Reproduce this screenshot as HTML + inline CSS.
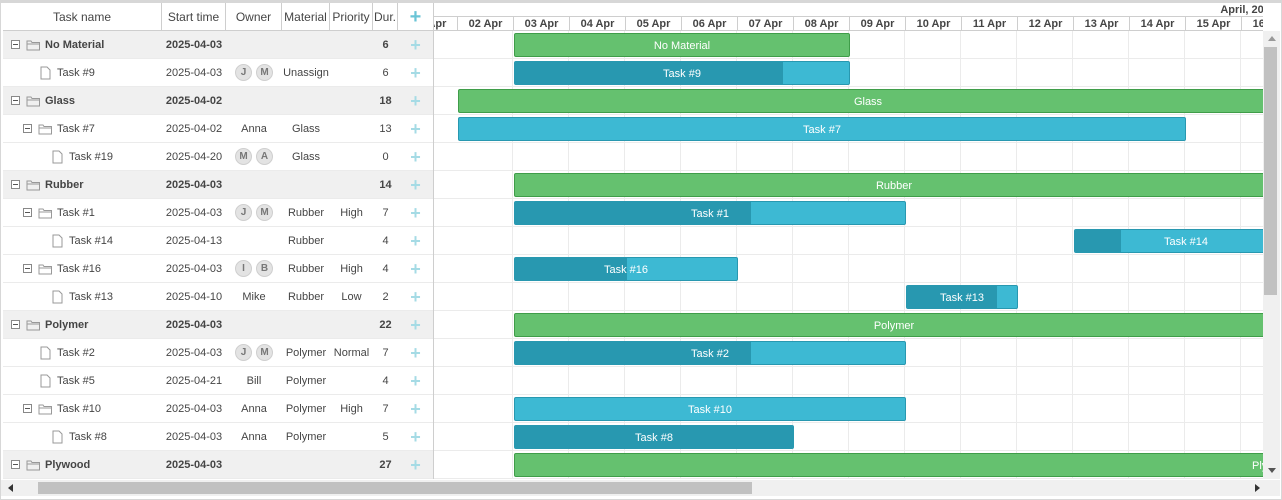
<!DOCTYPE html><html><head><meta charset="utf-8"><style>
*{box-sizing:border-box;margin:0;padding:0}
body{width:1282px;height:500px;background:#fff;font-family:"Liberation Sans",Arial,sans-serif;font-size:11px;color:#454545;position:relative;overflow:hidden}
.frame{position:absolute;left:0;top:0;width:1282px;height:500px;border:1px solid #d7d7d7;border-top:3px solid #d7d7d7}
.hdr{position:absolute;top:3px;left:3px;width:430px;height:28px;border-bottom:1px solid #cecece;display:flex;font-size:12px;color:#454545}
.hdr div{border-right:1px solid #cecece;text-align:center!important;line-height:29px;height:28px}
.row{position:absolute;left:3px;width:430px;height:28px;display:flex;border-bottom:1px solid #ebebeb;line-height:29px}
.row.g{background:#f0f0f0;font-weight:bold}
.row div{text-align:center;white-space:nowrap;overflow:hidden;position:relative}
.c1{width:159px;text-align:left!important}.c2{width:64px}.c3{width:56px}.c4{width:48px}.c5{width:43px}.c6{width:25px}.c7{width:35px}
.plus{color:#a5dbe5;font-size:18px;font-weight:bold}
.tg{position:absolute;top:9px;width:9px;height:9px;border:1px solid #888;background:#fff}
.tg:after{content:"";position:absolute;left:1px;top:3px;width:5px;height:1px;background:#555}
.ic{position:absolute;top:8px}
.nm{position:absolute}
.av{display:inline-block;width:17px;height:17px;border-radius:50%;background:#e3e3e3;border:1px solid #cfcfcf;line-height:15px;font-size:10px;font-weight:bold;color:#777;margin:0 2px;vertical-align:middle;position:relative;top:-1px}
.vsep{position:absolute;left:433px;top:3px;width:1px;height:476px;background:#cecece}
.chart{position:absolute;left:434px;top:3px;width:829px;height:476px;overflow:hidden}
.month{position:absolute;top:0;left:0;width:842px;height:14px;border-bottom:1px solid #cecece;text-align:right;font-weight:bold;font-size:11px;line-height:15px;color:#454545}
.days{position:absolute;top:14px;left:-32px;height:14px;border-bottom:1px solid #cecece;display:flex;white-space:nowrap}
.days div{width:56px;border-right:1px solid #cecece;text-align:center;font-weight:bold;font-size:11px;line-height:15px;flex:none}
.bg{position:absolute;top:28px;left:0;width:829px;height:448px;background-image:repeating-linear-gradient(to right,transparent 0,transparent 55px,#ebebeb 55px,#ebebeb 56px),repeating-linear-gradient(to bottom,transparent 0,transparent 27px,#ebebeb 27px,#ebebeb 28px);background-position:23px 0,0 0}
.bar{position:absolute;height:24px;border-radius:2px;color:#fff;text-align:center;line-height:24px;font-size:11px;overflow:hidden;white-space:nowrap}
.gr{background:#65c16f;border:1px solid #3f9d49}
.bl{background:#3db9d3;border:1px solid #2898b0}
.pr{position:absolute;left:0;top:0;height:100%;background:#2898b0}
.bar span{position:relative}
.vs{position:absolute;left:1263px;top:31px;width:17px;height:448px;background:#f0f0f0}
.hs{position:absolute;left:1px;top:480px;width:1279px;height:16px;background:#f0f0f0}
</style></head><body>
<div class="frame"></div>
<div class="hdr"><div class="c1">Task name</div><div class="c2">Start time</div><div class="c3">Owner</div><div class="c4">Material</div><div class="c5">Priority</div><div class="c6">Dur.</div><div class="c7 plus" style="font-size:20px;color:#6ac4d6;border-right:none">+</div></div>

<div class="row g" style="top:31px"><div class="c1"><span class="tg" style="left:8px"></span><svg class="ic" style="left:23px" width="15" height="12" viewBox="0 0 15 12"><path d="M1 2h4l1 1.5h7.5v7.5h-12.5z M1 5h12.5" fill="none" stroke="#999"/></svg><span class="nm" style="left:42px">No Material</span></div><div class="c2">2025-04-03</div><div class="c3"></div><div class="c4"></div><div class="c5"></div><div class="c6">6</div><div class="c7 plus">+</div></div>
<div class="row" style="top:59px"><div class="c1"><svg class="ic" style="left:37px;top:7px" width="11" height="14" viewBox="0 0 11 14"><path d="M1 1h6l3 3v9h-9z" fill="none" stroke="#999"/></svg><span class="nm" style="left:54px">Task #9</span></div><div class="c2">2025-04-03</div><div class="c3"><span class="av">J</span><span class="av">M</span></div><div class="c4">Unassign</div><div class="c5"></div><div class="c6">6</div><div class="c7 plus">+</div></div>
<div class="row g" style="top:87px"><div class="c1"><span class="tg" style="left:8px"></span><svg class="ic" style="left:23px" width="15" height="12" viewBox="0 0 15 12"><path d="M1 2h4l1 1.5h7.5v7.5h-12.5z M1 5h12.5" fill="none" stroke="#999"/></svg><span class="nm" style="left:42px">Glass</span></div><div class="c2">2025-04-02</div><div class="c3"></div><div class="c4"></div><div class="c5"></div><div class="c6">18</div><div class="c7 plus">+</div></div>
<div class="row" style="top:115px"><div class="c1"><span class="tg" style="left:20px"></span><svg class="ic" style="left:35px" width="15" height="12" viewBox="0 0 15 12"><path d="M1 2h4l1 1.5h7.5v7.5h-12.5z M1 5h12.5" fill="none" stroke="#999"/></svg><span class="nm" style="left:54px">Task #7</span></div><div class="c2">2025-04-02</div><div class="c3">Anna</div><div class="c4">Glass</div><div class="c5"></div><div class="c6">13</div><div class="c7 plus">+</div></div>
<div class="row" style="top:143px"><div class="c1"><svg class="ic" style="left:49px;top:7px" width="11" height="14" viewBox="0 0 11 14"><path d="M1 1h6l3 3v9h-9z" fill="none" stroke="#999"/></svg><span class="nm" style="left:66px">Task #19</span></div><div class="c2">2025-04-20</div><div class="c3"><span class="av">M</span><span class="av">A</span></div><div class="c4">Glass</div><div class="c5"></div><div class="c6">0</div><div class="c7 plus">+</div></div>
<div class="row g" style="top:171px"><div class="c1"><span class="tg" style="left:8px"></span><svg class="ic" style="left:23px" width="15" height="12" viewBox="0 0 15 12"><path d="M1 2h4l1 1.5h7.5v7.5h-12.5z M1 5h12.5" fill="none" stroke="#999"/></svg><span class="nm" style="left:42px">Rubber</span></div><div class="c2">2025-04-03</div><div class="c3"></div><div class="c4"></div><div class="c5"></div><div class="c6">14</div><div class="c7 plus">+</div></div>
<div class="row" style="top:199px"><div class="c1"><span class="tg" style="left:20px"></span><svg class="ic" style="left:35px" width="15" height="12" viewBox="0 0 15 12"><path d="M1 2h4l1 1.5h7.5v7.5h-12.5z M1 5h12.5" fill="none" stroke="#999"/></svg><span class="nm" style="left:54px">Task #1</span></div><div class="c2">2025-04-03</div><div class="c3"><span class="av">J</span><span class="av">M</span></div><div class="c4">Rubber</div><div class="c5">High</div><div class="c6">7</div><div class="c7 plus">+</div></div>
<div class="row" style="top:227px"><div class="c1"><svg class="ic" style="left:49px;top:7px" width="11" height="14" viewBox="0 0 11 14"><path d="M1 1h6l3 3v9h-9z" fill="none" stroke="#999"/></svg><span class="nm" style="left:66px">Task #14</span></div><div class="c2">2025-04-13</div><div class="c3"></div><div class="c4">Rubber</div><div class="c5"></div><div class="c6">4</div><div class="c7 plus">+</div></div>
<div class="row" style="top:255px"><div class="c1"><span class="tg" style="left:20px"></span><svg class="ic" style="left:35px" width="15" height="12" viewBox="0 0 15 12"><path d="M1 2h4l1 1.5h7.5v7.5h-12.5z M1 5h12.5" fill="none" stroke="#999"/></svg><span class="nm" style="left:54px">Task #16</span></div><div class="c2">2025-04-03</div><div class="c3"><span class="av">I</span><span class="av">B</span></div><div class="c4">Rubber</div><div class="c5">High</div><div class="c6">4</div><div class="c7 plus">+</div></div>
<div class="row" style="top:283px"><div class="c1"><svg class="ic" style="left:49px;top:7px" width="11" height="14" viewBox="0 0 11 14"><path d="M1 1h6l3 3v9h-9z" fill="none" stroke="#999"/></svg><span class="nm" style="left:66px">Task #13</span></div><div class="c2">2025-04-10</div><div class="c3">Mike</div><div class="c4">Rubber</div><div class="c5">Low</div><div class="c6">2</div><div class="c7 plus">+</div></div>
<div class="row g" style="top:311px"><div class="c1"><span class="tg" style="left:8px"></span><svg class="ic" style="left:23px" width="15" height="12" viewBox="0 0 15 12"><path d="M1 2h4l1 1.5h7.5v7.5h-12.5z M1 5h12.5" fill="none" stroke="#999"/></svg><span class="nm" style="left:42px">Polymer</span></div><div class="c2">2025-04-03</div><div class="c3"></div><div class="c4"></div><div class="c5"></div><div class="c6">22</div><div class="c7 plus">+</div></div>
<div class="row" style="top:339px"><div class="c1"><svg class="ic" style="left:37px;top:7px" width="11" height="14" viewBox="0 0 11 14"><path d="M1 1h6l3 3v9h-9z" fill="none" stroke="#999"/></svg><span class="nm" style="left:54px">Task #2</span></div><div class="c2">2025-04-03</div><div class="c3"><span class="av">J</span><span class="av">M</span></div><div class="c4">Polymer</div><div class="c5">Normal</div><div class="c6">7</div><div class="c7 plus">+</div></div>
<div class="row" style="top:367px"><div class="c1"><svg class="ic" style="left:37px;top:7px" width="11" height="14" viewBox="0 0 11 14"><path d="M1 1h6l3 3v9h-9z" fill="none" stroke="#999"/></svg><span class="nm" style="left:54px">Task #5</span></div><div class="c2">2025-04-21</div><div class="c3">Bill</div><div class="c4">Polymer</div><div class="c5"></div><div class="c6">4</div><div class="c7 plus">+</div></div>
<div class="row" style="top:395px"><div class="c1"><span class="tg" style="left:20px"></span><svg class="ic" style="left:35px" width="15" height="12" viewBox="0 0 15 12"><path d="M1 2h4l1 1.5h7.5v7.5h-12.5z M1 5h12.5" fill="none" stroke="#999"/></svg><span class="nm" style="left:54px">Task #10</span></div><div class="c2">2025-04-03</div><div class="c3">Anna</div><div class="c4">Polymer</div><div class="c5">High</div><div class="c6">7</div><div class="c7 plus">+</div></div>
<div class="row" style="top:423px"><div class="c1"><svg class="ic" style="left:49px;top:7px" width="11" height="14" viewBox="0 0 11 14"><path d="M1 1h6l3 3v9h-9z" fill="none" stroke="#999"/></svg><span class="nm" style="left:66px">Task #8</span></div><div class="c2">2025-04-03</div><div class="c3">Anna</div><div class="c4">Polymer</div><div class="c5"></div><div class="c6">5</div><div class="c7 plus">+</div></div>
<div class="row g" style="top:451px"><div class="c1"><span class="tg" style="left:8px"></span><svg class="ic" style="left:23px" width="15" height="12" viewBox="0 0 15 12"><path d="M1 2h4l1 1.5h7.5v7.5h-12.5z M1 5h12.5" fill="none" stroke="#999"/></svg><span class="nm" style="left:42px">Plywood</span></div><div class="c2">2025-04-03</div><div class="c3"></div><div class="c4"></div><div class="c5"></div><div class="c6">27</div><div class="c7 plus">+</div></div>

<div class="vsep"></div>
<div class="chart">
<div class="month">April, 2025</div>
<div class="days"><div>01 Apr</div><div>02 Apr</div><div>03 Apr</div><div>04 Apr</div><div>05 Apr</div><div>06 Apr</div><div>07 Apr</div><div>08 Apr</div><div>09 Apr</div><div>10 Apr</div><div>11 Apr</div><div>12 Apr</div><div>13 Apr</div><div>14 Apr</div><div>15 Apr</div><div>16 Apr</div></div>
<div class="bg"></div>
<div class="bar gr" style="left:80px;top:30px;width:336px">No Material</div>
<div class="bar bl" style="left:80px;top:58px;width:336px"><div class="pr" style="width:268px"></div><span>Task #9</span></div>
<div class="bar gr" style="left:24px;top:86px;width:820px">Glass</div>
<div class="bar bl" style="left:24px;top:114px;width:728px">Task #7</div>
<div class="bar gr" style="left:80px;top:170px;width:760px">Rubber</div>
<div class="bar bl" style="left:80px;top:198px;width:392px"><div class="pr" style="width:236px"></div><span>Task #1</span></div>
<div class="bar bl" style="left:640px;top:226px;width:224px"><div class="pr" style="width:46px"></div><span>Task #14</span></div>
<div class="bar bl" style="left:80px;top:254px;width:224px"><div class="pr" style="width:112px"></div><span>Task #16</span></div>
<div class="bar bl" style="left:472px;top:282px;width:112px"><div class="pr" style="width:90px"></div><span>Task #13</span></div>
<div class="bar gr" style="left:80px;top:310px;width:760px">Polymer</div>
<div class="bar bl" style="left:80px;top:338px;width:392px"><div class="pr" style="width:236px"></div><span>Task #2</span></div>
<div class="bar bl" style="left:80px;top:394px;width:392px">Task #10</div>
<div class="bar bl" style="left:80px;top:422px;width:280px"><div class="pr" style="width:280px"></div><span>Task #8</span></div>
<div class="bar gr" style="left:80px;top:450px;width:760px"><span style="position:absolute;left:737px">Plywood</span></div>
</div>
<div class="vs"><div style="position:absolute;left:5px;top:5px;width:0;height:0;border-left:4px solid transparent;border-right:4px solid transparent;border-bottom:5px solid #999"></div><div style="position:absolute;left:1px;top:16px;width:13px;height:248px;background:#c1c1c1"></div><div style="position:absolute;left:5px;top:437px;width:0;height:0;border-left:4px solid transparent;border-right:4px solid transparent;border-top:5px solid #555"></div></div>
<div class="hs"><div style="position:absolute;left:7px;top:4px;width:0;height:0;border-top:4px solid transparent;border-bottom:4px solid transparent;border-right:5px solid #333"></div><div style="position:absolute;left:37px;top:2px;width:714px;height:12px;background:#c1c1c1"></div><div style="position:absolute;left:1254px;top:4px;width:0;height:0;border-top:4px solid transparent;border-bottom:4px solid transparent;border-left:5px solid #333"></div></div>
</body></html>
